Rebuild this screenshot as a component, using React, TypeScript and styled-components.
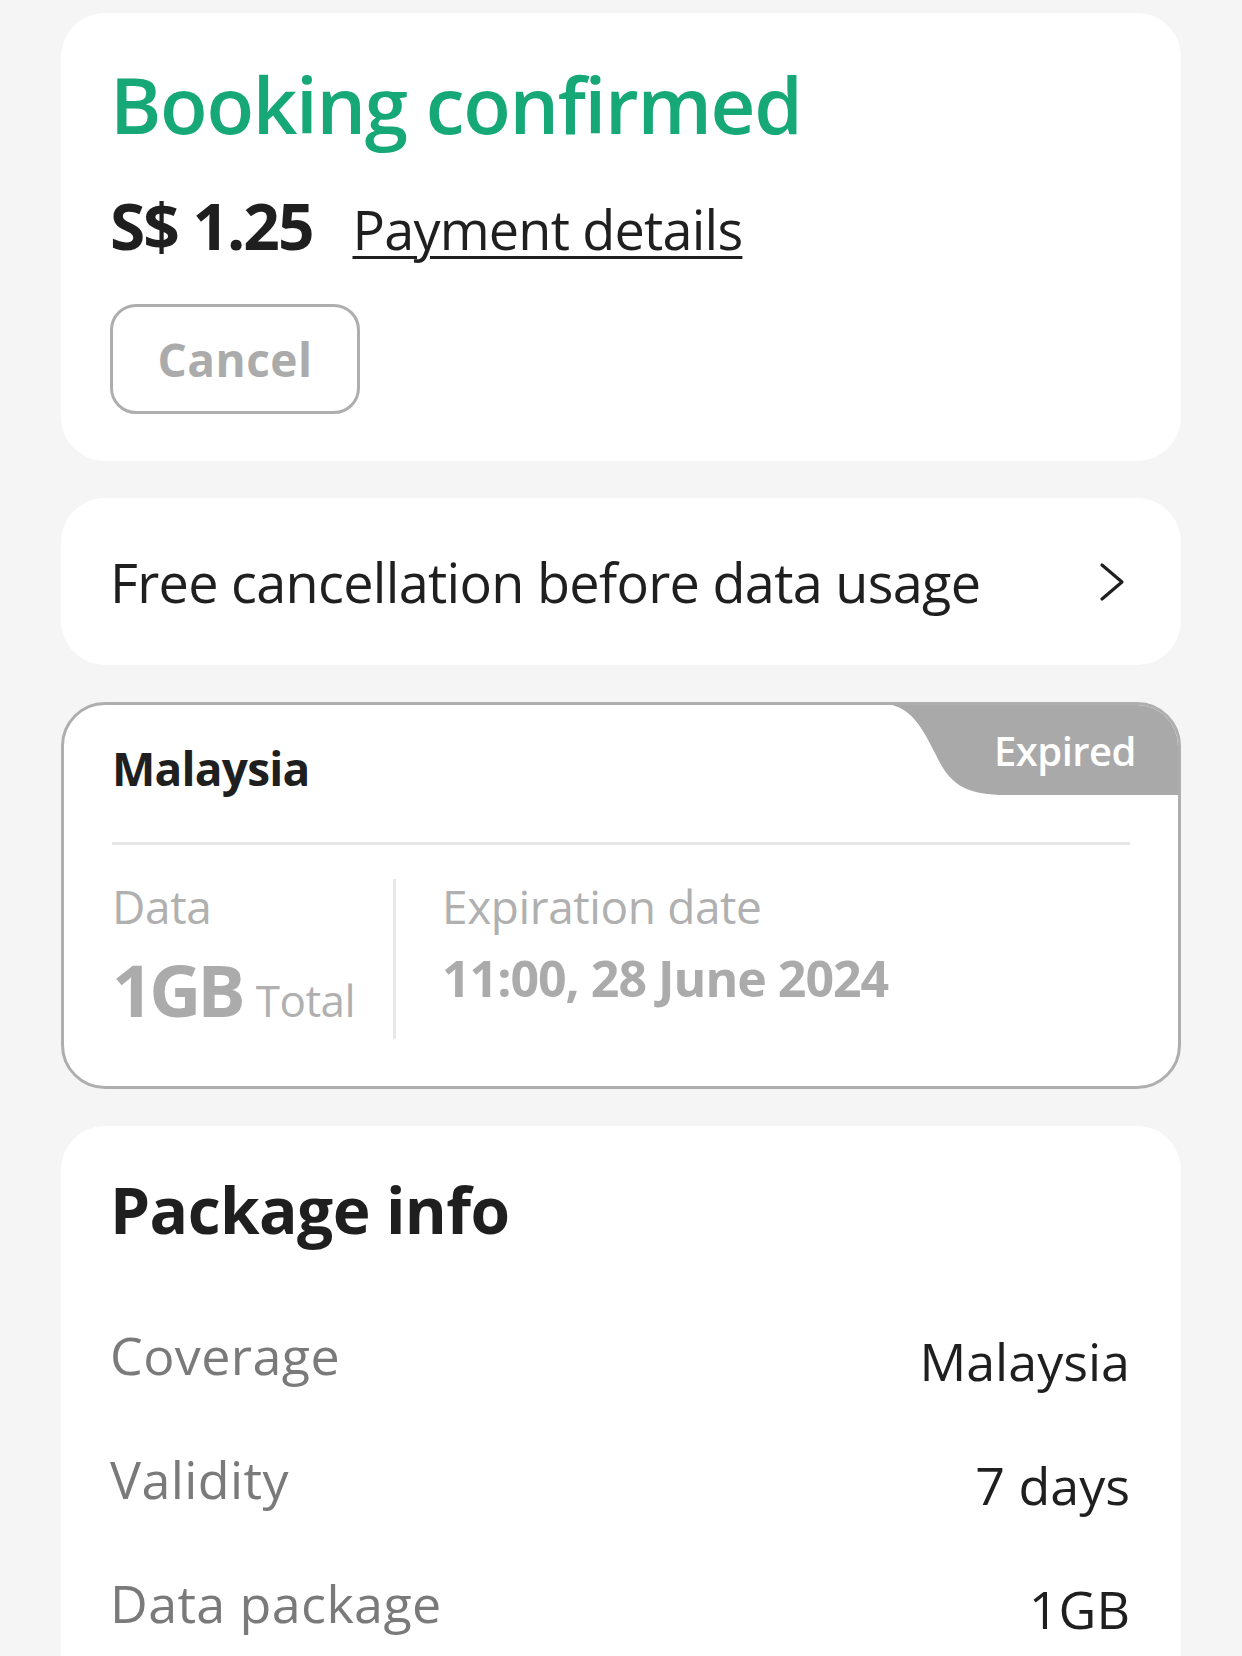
import React from 'react';
import styled, { createGlobalStyle } from 'styled-components';

const GlobalStyle = createGlobalStyle`
  html, body {
    margin: 0;
    padding: 0;
    background: #f5f5f5;
  }
  body {
    font-family: 'Open Sans', 'Noto Sans', sans-serif;
    color: #1f1f1f;
  }
`;

const Page = styled.div`
  display: flex;
  flex-direction: column;
  gap: 37px;
  padding: 13px 61px 0;
  width: 1120px;
`;

const Card = styled.section<{ $outlined?: boolean }>`
  position: relative;
  background: #fff;
  border-radius: 44px;
  overflow: hidden;
  border: ${(p) => (p.$outlined ? '3px solid #aeaeae' : 'none')};
`;

const SummaryCard = styled(Card)`
  padding: 52px 49px 47px;
  display: flex;
  flex-direction: column;
  align-items: flex-start;
`;

const Title = styled.h1`
  margin: 0;
  font-size: 78px;
  line-height: 1;
  font-weight: 600;
  color: #17a878;
  letter-spacing: -1.3px;
`;

const PriceRow = styled.div`
  display: flex;
  align-items: baseline;
  gap: 40px;
  margin-top: 51px;
  line-height: 1;
`;

const Price = styled.span`
  font-size: 64px;
  font-weight: 700;
  color: #1f1f1f;
  letter-spacing: -2px;
`;

const DetailsLink = styled.a`
  font-size: 54px;
  color: #1f1f1f;
  letter-spacing: -0.8px;
  text-decoration: underline;
  text-decoration-thickness: 3px;
  text-underline-offset: 6px;
`;

const GhostButton = styled.button`
  margin-top: 46px;
  box-sizing: border-box;
  width: 250px;
  height: 110px;
  border: 3px solid #aeaeae;
  border-radius: 26px;
  background: #fff;
  color: #ababab;
  font-family: inherit;
  font-size: 46px;
  font-weight: 700;
  letter-spacing: 0.5px;
`;

const LinkCard = styled(Card)`
  height: 167px;
  padding: 0 55px 0 49px;
  display: flex;
  align-items: center;
  justify-content: space-between;
`;

const LinkText = styled.span`
  font-size: 54px;
  color: #1f1f1f;
  letter-spacing: -0.7px;
`;

const Chevron = () => (
  <svg width='28' height='40' viewBox='0 0 28 40' fill='none'>
    <path d='M4 3 L24 20 L4 37' stroke='#1f1f1f' strokeWidth='3.2' strokeLinecap='round' strokeLinejoin='round' />
  </svg>
);

const PlanCard = styled(Card)`
  height: 387px;
  box-sizing: border-box;
  padding: 0 48px;
`;

const Badge = styled.div`
  position: absolute;
  top: 0;
  right: 0;
  width: 312px;
  height: 90px;
`;

const BadgeLabel = styled.span`
  position: absolute;
  right: 42px;
  top: 18px;
  font-size: 40px;
  font-weight: 600;
  color: #fff;
  letter-spacing: -0.5px;
`;

const PlanHeader = styled.div`
  height: 140px;
  display: flex;
  align-items: center;
  border-bottom: 3px solid #e8e8e8;
  box-sizing: border-box;
  padding-bottom: 12px;
`;

const PlanName = styled.span`
  font-size: 46px;
  font-weight: 700;
  color: #1f1f1f;
  letter-spacing: -0.8px;
`;

const StatsRow = styled.div`
  display: flex;
  padding-top: 34px;
`;

const Stat = styled.div<{ $divided?: boolean }>`
  display: flex;
  flex-direction: column;
  width: ${(p) => (p.$divided ? '281px' : 'auto')};
  border-right: ${(p) => (p.$divided ? '3px solid #e8e8e8' : 'none')};
  padding-left: ${(p) => (p.$divided ? '0' : '46px')};
  height: 160px;
`;

const StatLabel = styled.span`
  font-size: 46px;
  color: #b0b0b0;
  line-height: 1.2;
  letter-spacing: -0.4px;
`;

const StatValue = styled.span`
  margin-top: 19px;
  line-height: 1;
  color: #ababab;
  display: flex;
  align-items: baseline;
  gap: 14px;
`;

const BigNumber = styled.span<{ $size: number }>`
  font-size: ${(p) => p.$size}px;
  font-weight: 700;
  letter-spacing: ${(p) => (p.$size > 60 ? '-4px' : '-1px')};
`;

const Unit = styled.span`
  font-size: 44px;
  color: #b0b0b0;
  letter-spacing: -0.5px;
`;

const InfoCard = styled(Card)`
  padding: 52px 51px 60px 49px;
  border-bottom-left-radius: 0;
  border-bottom-right-radius: 0;
`;

const SectionTitle = styled.h2`
  margin: 0 0 30px;
  font-size: 64px;
  line-height: 1;
  font-weight: 700;
  color: #1f1f1f;
  letter-spacing: -0.6px;
`;

const InfoRow = styled.div`
  display: flex;
  justify-content: space-between;
  align-items: flex-end;
  height: 124px;
`;

const InfoLabel = styled.span`
  font-size: 52px;
  color: #7a7a7a;
  letter-spacing: 0.4px;
  padding-bottom: 6px;
`;

const InfoValue = styled.span`
  font-size: 52px;
  color: #1f1f1f;
`;

const rows = [
  { label: 'Coverage', value: 'Malaysia' },
  { label: 'Validity', value: '7 days' },
  { label: 'Data package', value: '1GB' },
];

const App: React.FC = () => (
  <>
    <GlobalStyle />
    <Page>
      <SummaryCard>
        <Title>Booking confirmed</Title>
        <PriceRow>
          <Price>S$ 1.25</Price>
          <DetailsLink>Payment details</DetailsLink>
        </PriceRow>
        <GhostButton>Cancel</GhostButton>
      </SummaryCard>

      <LinkCard>
        <LinkText>Free cancellation before data usage</LinkText>
        <Chevron />
      </LinkCard>

      <PlanCard $outlined>
        <Badge>
          <svg width='312' height='90' viewBox='0 0 312 90'>
            <path d='M0 -3 C40 -3 50 10 70 50 C84 80 100 90 140 90 L312 90 L312 -3 Z' fill='#a9a9a9' />
          </svg>
          <BadgeLabel>Expired</BadgeLabel>
        </Badge>
        <PlanHeader>
          <PlanName>Malaysia</PlanName>
        </PlanHeader>
        <StatsRow>
          <Stat $divided>
            <StatLabel>Data</StatLabel>
            <StatValue>
              <BigNumber $size={72}>1GB</BigNumber>
              <Unit>Total</Unit>
            </StatValue>
          </Stat>
          <Stat>
            <StatLabel>Expiration date</StatLabel>
            <StatValue>
              <BigNumber $size={50}>11:00, 28 June 2024</BigNumber>
            </StatValue>
          </Stat>
        </StatsRow>
      </PlanCard>

      <InfoCard>
        <SectionTitle>Package info</SectionTitle>
        {rows.map((row) => (
          <InfoRow key={row.label}>
            <InfoLabel>{row.label}</InfoLabel>
            <InfoValue>{row.value}</InfoValue>
          </InfoRow>
        ))}
      </InfoCard>
    </Page>
  </>
);

export default App;
